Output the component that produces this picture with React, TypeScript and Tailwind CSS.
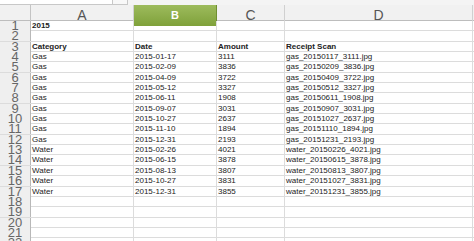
import React from 'react';

const rows: string[][] = [
  ['2015', '', '', ''],
  ['', '', '', ''],
  ['Category', 'Date', 'Amount', 'Receipt Scan'],
  ['Gas', '2015-01-17', '3111', 'gas_20150117_3111.jpg'],
  ['Gas', '2015-02-09', '3836', 'gas_20150209_3836.jpg'],
  ['Gas', '2015-04-09', '3722', 'gas_20150409_3722.jpg'],
  ['Gas', '2015-05-12', '3327', 'gas_20150512_3327.jpg'],
  ['Gas', '2015-06-11', '1908', 'gas_20150611_1908.jpg'],
  ['Gas', '2015-09-07', '3031', 'gas_20150907_3031.jpg'],
  ['Gas', '2015-10-27', '2637', 'gas_20151027_2637.jpg'],
  ['Gas', '2015-11-10', '1894', 'gas_20151110_1894.jpg'],
  ['Gas', '2015-12-31', '2193', 'gas_20151231_2193.jpg'],
  ['Water', '2015-02-26', '4021', 'water_20150226_4021.jpg'],
  ['Water', '2015-06-15', '3878', 'water_20150615_3878.jpg'],
  ['Water', '2015-08-13', '3807', 'water_20150813_3807.jpg'],
  ['Water', '2015-10-27', '3831', 'water_20151027_3831.jpg'],
  ['Water', '2015-12-31', '3855', 'water_20151231_3855.jpg'],
  ['', '', '', ''],
  ['', '', '', ''],
  ['', '', '', ''],
  ['', '', '', ''],
  ['', '', '', ''],
];

const cols = ['A', 'B', 'C', 'D'];
const grid = 'grid grid-cols-[31px_103px_83px_68px_188px_1fr]';

const App: React.FC = () => {
  return (
    <div className="w-[474px] h-[241px] overflow-hidden bg-white font-['Liberation_Sans',Arial,sans-serif]">
      {/* formula bar remnant */}
      <div className="flex h-[5px] bg-[#f4f4f4]">
        <div className="w-[113px] bg-white border-b border-r border-[#c8c8c8]" />
        <div className="w-[15px] bg-[#f8f8f8] border-b border-r border-[#c8c8c8]" />
      </div>

      {/* column headers */}
      <div className={`${grid} h-[16px] border-b border-[#bdbdbd] bg-[#f1f1f1]`}>
        <div className="border-r border-[#c4c4c4]" />
        {cols.map((c) =>
          c === 'B' ? (
            <div
              key={c}
              className="flex items-center justify-center border-r border-[#6f8f30] bg-gradient-to-b from-[#9dbb5c] to-[#7fa13a] text-[11px] font-bold text-white"
            >
              {c}
            </div>
          ) : (
            <div key={c} className="flex items-center justify-center border-r border-[#d0d0d0] text-[14px] text-[#555]">
              {c}
            </div>
          )
        )}
        <div />
      </div>

      {/* rows */}
      {rows.map((r, i) => {
        const bold = i === 0 || i === 2;
        return (
          <div key={i} className={`${grid} h-[10.35px] border-b border-[#dcdcdc]`}>
            <div className="flex items-center justify-center overflow-visible border-r border-[#b8b8b8] bg-[#efefef] text-[13px] leading-[10px] text-[#666]">
              {i + 1}
            </div>
            {r.map((v, j) => (
              <div
                key={j}
                className={`flex items-end overflow-visible whitespace-nowrap border-r border-[#dcdcdc] pl-[1px] text-[8px] leading-[10px] text-[#222] ${bold ? 'font-bold' : ''}`}
              >
                {v}
              </div>
            ))}
            <div />
          </div>
        );
      })}
    </div>
  );
};

export default App;
